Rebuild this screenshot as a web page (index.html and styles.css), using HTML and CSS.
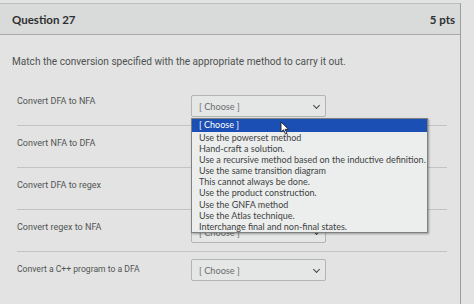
FILE: index.html
```html
<!DOCTYPE html>
<html lang="en">
<head>
    <meta charset="UTF-8">
    <meta name="viewport" content="width=device-width, initial-scale=1.0">
    <title>Question 27</title>
    <link rel="stylesheet" href="styles.css">
</head>
<body>
    <div class="question">
        <div class="question-header">
            <span class="question-name">Question 27</span>
            <span class="question-points">5 pts</span>
        </div>
        <div class="question-text">Match the conversion specified with the appropriate method to carry it out.</div>

        <div class="answers">
            <div class="answer-row">
                <div class="answer-label">Convert DFA to NFA</div>
                <div class="select-wrap">
                    <div class="select">[ Choose ]<span class="chevron"></span></div>
                    <ul class="dropdown">
                        <li class="selected">[ Choose ]</li>
                        <li>Use the powerset method</li>
                        <li>Hand-craft a solution.</li>
                        <li>Use a recursive method based on the inductive definition.</li>
                        <li>Use the same transition diagram</li>
                        <li>This cannot always be done.</li>
                        <li>Use the product construction.</li>
                        <li>Use the GNFA method</li>
                        <li>Use the Atlas technique.</li>
                        <li>Interchange final and non-final states.</li>
                    </ul>
                    <svg class="cursor" width="10" height="14" viewBox="0 0 10 14">
                        <path d="M1 1 L1 11 L3.5 8.8 L5.5 13 L7 12.3 L5 8.3 L8.5 8.3 Z" fill="#fff" stroke="#222" stroke-width="0.9" stroke-linejoin="round"/>
                    </svg>
                </div>
            </div>
            <div class="answer-row">
                <div class="answer-label">Convert NFA to DFA</div>
                <div class="select-wrap">
                    <div class="select">[ Choose ]<span class="chevron"></span></div>
                </div>
            </div>
            <div class="answer-row">
                <div class="answer-label">Convert DFA to regex</div>
                <div class="select-wrap">
                    <div class="select">[ Choose ]<span class="chevron"></span></div>
                </div>
            </div>
            <div class="answer-row">
                <div class="answer-label">Convert regex to NFA</div>
                <div class="select-wrap">
                    <div class="select">[ Choose ]<span class="chevron"></span></div>
                </div>
            </div>
            <div class="answer-row last">
                <div class="answer-label">Convert a C++ program to a DFA</div>
                <div class="select-wrap">
                    <div class="select">[ Choose ]<span class="chevron"></span></div>
                </div>
            </div>
        </div>
    </div>
</body>
</html>
```

FILE: styles.css
```css
/* Quiz question styling */
body {
    margin: 0;
    background-color: #e2e3e2;
    font-family: Roboto, 'Liberation Sans', sans-serif;
    color: #4a4c4c;
    overflow: hidden;
}

.question {
    margin-top: 3px;
    width: 461px;
    height: 301px;
    border-top: 1px solid #bcbebe;
    border-right: 1px solid #9c9e9e;
    box-sizing: border-box;
}

.question-header {
    height: 30px;
    display: flex;
    align-items: center;
    justify-content: space-between;
    padding: 0 5px 0 12px;
    background-color: #d9dada;
    border-bottom: 1px solid #a9abab;
    font-family: Lato, Roboto, sans-serif;
    font-weight: bold;
    font-size: 11.5px;
    color: #2e3030;
}

.question-text {
    padding: 21px 0 0 12px;
    font-size: 10.1px;
    color: #505252;
    height: 28px;
}

.answers {
    margin: 0 13px 0 17px;
}

.answer-row {
    display: flex;
    height: 42px;
    padding-top: 11px;
    box-sizing: border-box;
    border-bottom: 1px solid #c2c4c4;
}

.answer-row.last {
    border-bottom: none;
    padding-top: 7px;
}

.answer-label {
    width: 174px;
    font-size: 9px;
    line-height: 12px;
    color: #525454;
}

.answer-row.last .answer-label {
    padding-top: 4px;
    font-size: 8.6px;
}

.select-wrap {
    position: relative;
}

.select {
    width: 135px;
    height: 22px;
    box-sizing: border-box;
    border: 1px solid #b3b5b5;
    border-radius: 2px;
    background-color: #e5e6e6;
    padding-left: 7px;
    display: flex;
    align-items: center;
    font-family: Lato, Roboto, sans-serif;
    font-size: 9.2px;
    color: #6b6d6d;
    position: relative;
}

.chevron {
    position: absolute;
    right: 6px;
    top: 7px;
    width: 4px;
    height: 4px;
    border-right: 1.5px solid #444;
    border-bottom: 1.5px solid #444;
    transform: rotate(45deg);
}

.dropdown {
    position: absolute;
    top: 23px;
    left: 0;
    width: 235px;
    margin: 0;
    padding: 0;
    list-style: none;
    background-color: #eceeed;
    border: 1px solid #7f8181;
    box-shadow: 1px 1px 2px rgba(0, 0, 0, 0.35);
    font-family: Lato, Roboto, sans-serif;
    font-size: 9px;
    color: #404242;
    z-index: 2;
}

.dropdown li {
    height: 11.2px;
    line-height: 11.2px;
    padding-left: 7px;
    white-space: nowrap;
}

.dropdown li.selected {
    background-color: #1b4fb3;
    color: #ffffff;
    height: 12.5px;
    line-height: 12.5px;
}

.cursor {
    position: absolute;
    left: 89px;
    top: 26px;
    z-index: 3;
}
```
